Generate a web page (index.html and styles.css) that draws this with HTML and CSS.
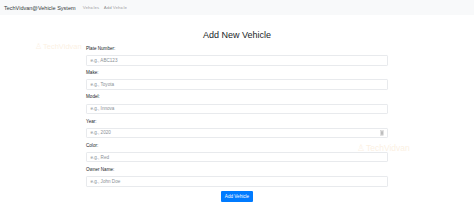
FILE: index.html
```html
<!DOCTYPE html>
<html lang="en">

<head>
    <meta charset="UTF-8">
    <meta name="viewport" content="width=device-width, initial-scale=1.0">
    <title>Add New Vehicle</title>
    <link rel="stylesheet" href="styles.css">
</head>

<body>
    <nav class="navbar">
        <span class="brand">TechVidvan@Vehicle System</span>
        <a class="nav-link" href="#">Vehicles</a>
        <a class="nav-link" href="#">Add Vehicle</a>
    </nav>

    <div class="container">
        <h2 class="title">Add New Vehicle</h2>
        <form>
            <div class="form-group">
                <label for="plate">Plate Number:</label>
                <input type="text" id="plate" placeholder="e.g., ABC123">
            </div>
            <div class="form-group">
                <label for="make">Make:</label>
                <input type="text" id="make" placeholder="e.g., Toyota">
            </div>
            <div class="form-group">
                <label for="model">Model:</label>
                <input type="text" id="model" placeholder="e.g., Innova">
            </div>
            <div class="form-group">
                <label for="year">Year:</label>
                <div class="number-wrap">
                    <input type="number" id="year" placeholder="e.g., 2020">
                    <svg class="spinner" width="4" height="6" viewBox="0 0 4 6">
                        <rect x="0.25" y="0.25" width="3.5" height="5.5" fill="#f1f1f1" stroke="#c4c4c4" stroke-width="0.4"/>
                        <path d="M1 2.4 L2 1 L3 2.4 Z" fill="#777"/>
                        <path d="M1 3.6 L2 5 L3 3.6 Z" fill="#777"/>
                    </svg>
                </div>
            </div>
            <div class="form-group">
                <label for="color">Color:</label>
                <input type="text" id="color" placeholder="e.g., Red">
            </div>
            <div class="form-group">
                <label for="owner">Owner Name:</label>
                <input type="text" id="owner" placeholder="e.g., John Doe">
            </div>
            <div class="actions">
                <button type="submit" class="btn-primary">Add Vehicle</button>
            </div>
        </form>
    </div>

    <!-- faint watermarks on the screenshot -->
    <div class="watermark wm-left"><span class="wm-icon">&#9817;</span>TechVidvan</div>
    <div class="watermark wm-right"><span class="wm-icon">&#9817;</span>TechVidvan</div>
</body>

</html>
```

FILE: styles.css
```css
body {
    margin: 0;
    font-family: "Liberation Sans", Arial, sans-serif;
    color: #212529;
    background-color: #fff;
}

.navbar {
    display: flex;
    align-items: center;
    height: 15px;
    padding-left: 4px;
    background-color: #f8f9fa;
}

.brand {
    font-size: 5.5px;
    color: #343a40;
    margin-right: 5px;
}

.nav-link {
    font-size: 4.4px;
    color: rgba(0, 0, 0, 0.45);
    text-decoration: none;
    padding: 0 2.3px;
}

.container {
    width: 302px;
    margin: 0 auto;
    padding-top: 14.5px;
}

.title {
    font-size: 9px;
    line-height: 11px;
    font-weight: normal;
    text-align: center;
    margin: 0 0 5.4px;
}

.form-group {
    margin-bottom: 4.5px;
}

label {
    display: block;
    font-size: 4.6px;
    line-height: 6.9px;
    margin-bottom: 2.3px;
}

input {
    display: block;
    width: 100%;
    height: 10.5px;
    box-sizing: border-box;
    margin: 0;
    padding: 0 3.4px;
    font-family: inherit;
    font-size: 4.6px;
    color: #495057;
    border: 1px solid #e8eaed;
    border-radius: 1.1px;
    outline: none;
}

input::placeholder {
    color: #8a9096;
}

input[type=number]::-webkit-inner-spin-button,
input[type=number]::-webkit-outer-spin-button {
    -webkit-appearance: none;
    margin: 0;
}

.number-wrap {
    position: relative;
}

.spinner {
    position: absolute;
    right: 4.5px;
    top: 2.3px;
}

.actions {
    display: flex;
    justify-content: center;
}

.btn-primary {
    height: 10.5px;
    padding: 0 3.4px;
    font-family: inherit;
    font-size: 4.6px;
    color: #fff;
    background-color: #007bff;
    border: none;
    border-radius: 1.1px;
    cursor: pointer;
}

.watermark {
    position: absolute;
    color: #f0b66e;
    opacity: 0.2;
    white-space: nowrap;
    pointer-events: none;
}

.wm-icon {
    margin-right: 1px;
}

.wm-left {
    left: 35px;
    top: 42px;
    font-size: 7.5px;
}

.wm-right {
    left: 357px;
    top: 143px;
    font-size: 8.5px;
}
```
